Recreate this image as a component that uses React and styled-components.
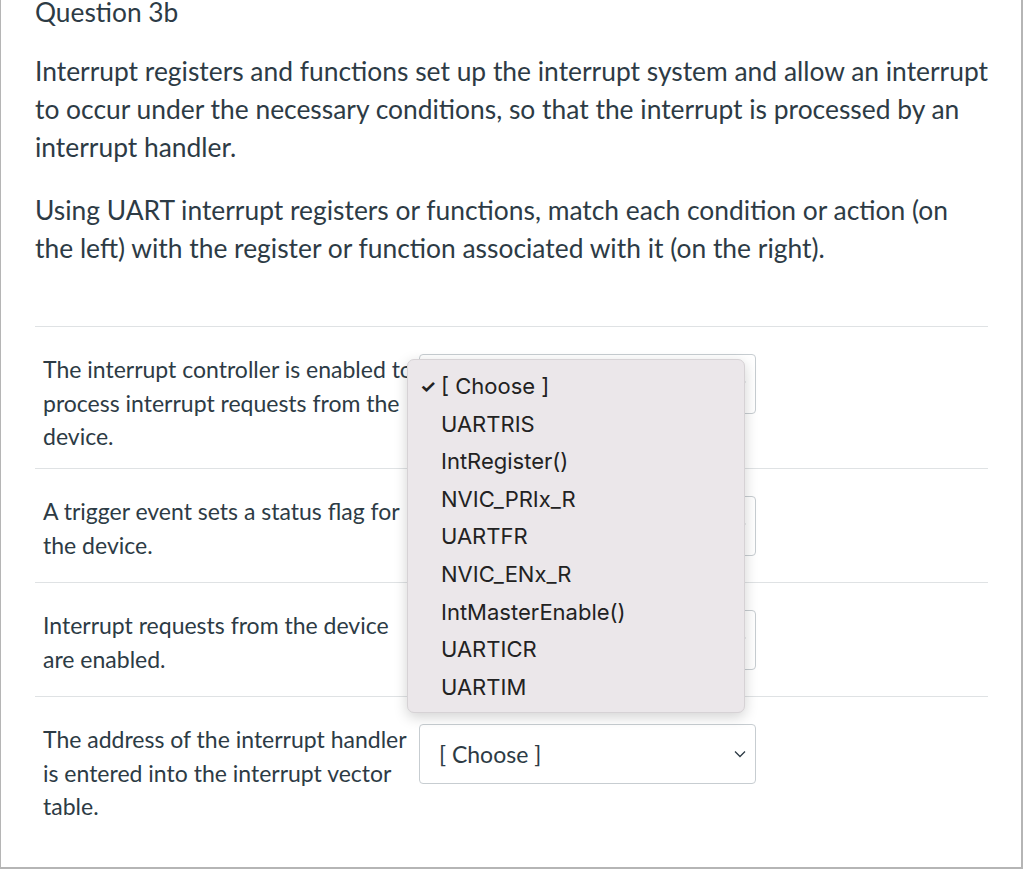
import React from 'react'
import styled, { createGlobalStyle } from 'styled-components'

const GlobalStyle = createGlobalStyle`
  html, body {
    margin: 0;
    padding: 0;
    background: #ffffff;
  }
  body {
    font-family: Lato, "Open Sans", sans-serif;
    color: #2d3b45;
  }
`

const Frame = styled.div`
  box-sizing: border-box;
  width: 1023px;
  height: 870px;
  border-left: 1px solid #b5b5b5;
  border-right: 2px solid #b5b5b5;
  border-bottom: 2px solid #b5b5b5;
  padding: 0 33px 0 34px;
`

const Title = styled.div`
  font-size: 26.3px;
  line-height: 26px;
  margin-top: -1px;
`

const Para = styled.p`
  font-size: 26.4px;
  line-height: 38px;
  margin: ${p => p.$top}px 0 0;
`

const Answers = styled.div`
  margin-top: 59px;
  border-top: 1px solid #dfe2e4;
`

const Row = styled.div`
  display: flex;
  align-items: flex-start;
  padding: 27px 0 26px;
  border-bottom: ${p => (p.$last ? 'none' : '1px solid #dfe2e4')};
`

const Label = styled.div`
  width: 376px;
  padding-left: 8px;
  font-size: 23px;
  line-height: 33.5px;
  margin: -1px 0 -11.5px;
`

const SelectWrap = styled.div`
  position: relative;
`

const Select = styled.div`
  box-sizing: border-box;
  width: 337px;
  height: 60px;
  border: 1px solid #c7cdd1;
  border-radius: 4px;
  background: #fff;
  display: flex;
  align-items: center;
  justify-content: space-between;
  padding: 0 9px 0 19px;
  font-size: 23px;
`

const Menu = styled.ul`
  position: absolute;
  left: -12px;
  top: 5px;
  z-index: 5;
  width: 338px;
  box-sizing: border-box;
  margin: 0;
  padding: 8px 0 6px;
  list-style: none;
  background: #ebe7ea;
  border: 1px solid #d6d2d5;
  border-radius: 7px;
  box-shadow: 0 4px 14px rgba(0, 0, 0, 0.18);
  font-family: Inter, "Liberation Sans", sans-serif;
  color: #222;
`

const Item = styled.li`
  position: relative;
  height: 37.6px;
  line-height: 37.6px;
  padding-left: 33px;
  font-size: 22px;
`

const Check = styled.span`
  position: absolute;
  left: 12px;
  top: 0;
  font-size: 18px;
  font-weight: 700;
`

const Chevron = () => (
  <svg width="12" height="8" viewBox="0 0 12 8" fill="none">
    <path d="M1 1.5 L6 6.5 L11 1.5" stroke="#2d3b45" strokeWidth="1.3" />
  </svg>
)

const options = [
  '[ Choose ]',
  'UARTRIS',
  'IntRegister()',
  'NVIC_PRIx_R',
  'UARTFR',
  'NVIC_ENx_R',
  'IntMasterEnable()',
  'UARTICR',
  'UARTIM',
]

const rows = [
  'The interrupt controller is enabled to process interrupt requests from the device.',
  'A trigger event sets a status flag for the device.',
  'Interrupt requests from the device are enabled.',
  'The address of the interrupt handler is entered into the interrupt vector table.',
]

export default function App() {
  return (
    <>
      <GlobalStyle />
      <Frame>
        <Title>Question 3b</Title>
        <Para $top={27}>
          Interrupt registers and functions set up the interrupt system and allow an interrupt
          to occur under the necessary conditions, so that the interrupt is processed by an
          interrupt handler.
        </Para>
        <Para $top={25}>
          Using UART interrupt registers or functions, match each condition or action (on
          the left) with the register or function associated with it (on the right).
        </Para>
        <Answers>
          {rows.map((text, i) => (
            <Row key={i} $last={i === rows.length - 1}>
              <Label>{text}</Label>
              <SelectWrap>
                <Select>
                  <span>[ Choose ]</span>
                  <Chevron />
                </Select>
                {i === 0 && (
                  <Menu>
                    {options.map((o, j) => (
                      <Item key={o}>
                        {j === 0 && <Check>✓</Check>}
                        {o}
                      </Item>
                    ))}
                  </Menu>
                )}
              </SelectWrap>
            </Row>
          ))}
        </Answers>
      </Frame>
    </>
  )
}
